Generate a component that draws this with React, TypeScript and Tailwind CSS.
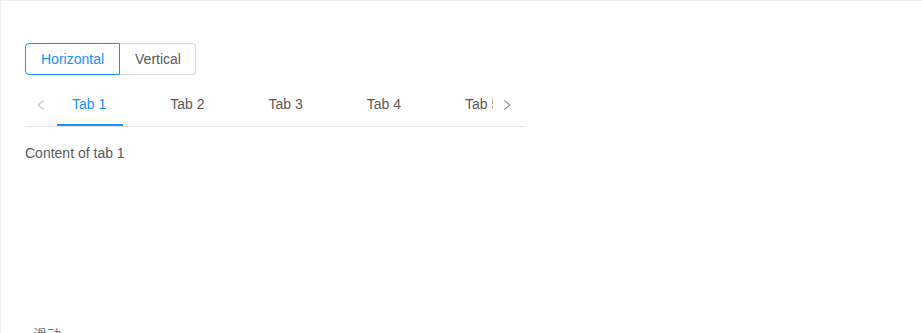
import React from "react";

const LeftIcon = ({ color }: { color: string }) => (
  <svg viewBox="64 64 896 896" width="12" height="12" fill={color}>
    <path d="M724 218.3V141c0-6.7-7.7-10.4-12.9-6.3L260.3 486.8a31.86 31.86 0 000 50.3l450.8 352.1c5.3 4.1 12.9.4 12.9-6.3v-77.3c0-4.9-2.3-9.6-6.1-12.6l-360-281 360-281.1c3.8-3 6.1-7.7 6.1-12.6z" />
  </svg>
);

const RightIcon = ({ color }: { color: string }) => (
  <svg viewBox="64 64 896 896" width="12" height="12" fill={color}>
    <path d="M765.7 486.8L314.9 134.7A7.970 7.970 0 00302 141v77.3c0 4.9 2.3 9.6 6.1 12.6l360 281.1-360 281.1c-3.9 3-6.1 7.7-6.1 12.6V883c0 6.7 7.7 10.4 12.9 6.3l450.8-352.1a31.96 31.96 0 000-50.4z" />
  </svg>
);

const tabs = ["Tab 1", "Tab 2", "Tab 3", "Tab 4", "Tab 5"];

export default function App() {
  return (
    <div
      className="w-[922px] h-[333px] overflow-hidden bg-white text-[14px] text-[#595959]"
      style={{ fontFamily: "'Liberation Sans', Arial, 'Noto Sans CJK SC', sans-serif" }}
    >
      <div className="w-[940px] border-l border-t border-[#ebedf0] pt-[42px] px-6">
        {/* Radio group */}
        <div className="flex mb-2">
          <div className="h-8 px-[15px] flex items-center border border-[#1890ff] rounded-l-[4px] text-[#1890ff] leading-[30px]">
            Horizontal
          </div>
          <div className="h-8 pl-[15px] pr-[14px] flex items-center border border-l-0 border-[#d9d9d9] rounded-r-[4px] leading-[30px]">
            Vertical
          </div>
        </div>

        {/* Tabs */}
        <div className="w-[500px]">
          <div className="flex h-[44px] border-b border-[#e8e8e8]">
            <div className="w-8 flex items-center justify-center">
              <LeftIcon color="#bfbfbf" />
            </div>
            <div className="flex-1 overflow-hidden">
              <div className="flex h-full">
                {tabs.map((t, i) => (
                  <div
                    key={t}
                    className={`relative shrink-0 h-full pl-[15px] pr-[17px] mr-8 pt-[10px] leading-[22px] whitespace-nowrap ${
                      i === 0 ? "text-[#1890ff]" : ""
                    }`}
                  >
                    {t}
                    {i === 0 && (
                      <div className="absolute left-0 right-0 bottom-0 h-[2px] bg-[#1890ff]" />
                    )}
                  </div>
                ))}
              </div>
            </div>
            <div className="w-8 flex items-center justify-center pr-[4px]">
              <RightIcon color="#8c8c8c" />
            </div>
          </div>
          <div className="pt-[15px] leading-[22px]">Content of tab 1</div>
        </div>

        <div className="mt-[160px] ml-2 leading-[22px] text-[#777]">滑动</div>
      </div>
    </div>
  );
}
